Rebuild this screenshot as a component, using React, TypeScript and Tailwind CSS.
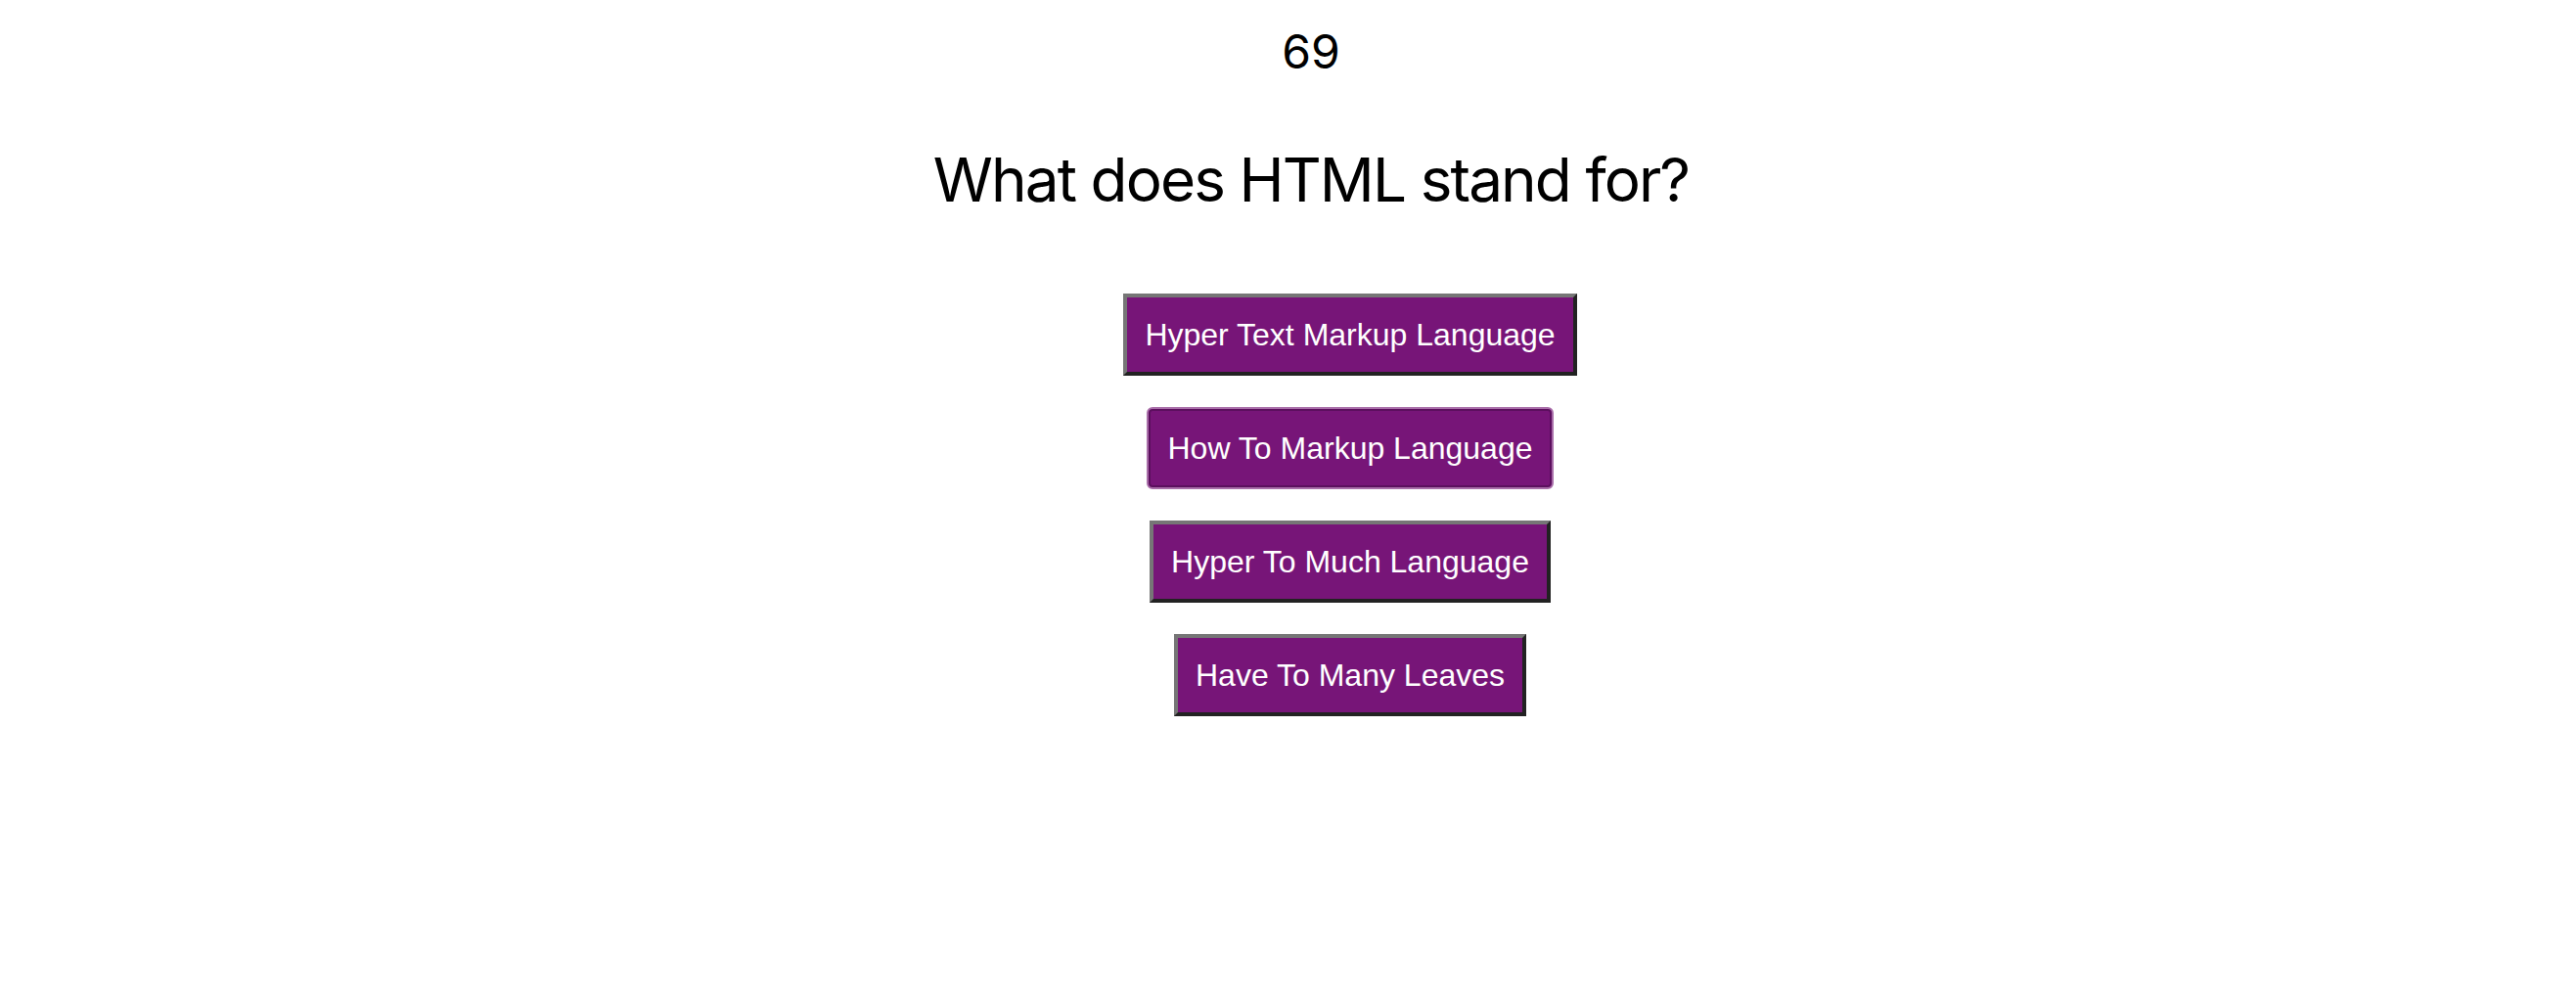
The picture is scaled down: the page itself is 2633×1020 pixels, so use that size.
import React from 'react';

const answers = [
  { label: 'Hyper Text Markup Language', style: 'outset' },
  { label: 'How To Markup Language', style: 'rounded' },
  { label: 'Hyper To Much Language', style: 'outset' },
  { label: 'Have To Many Leaves', style: 'outset' },
];

function AnswerButton({ label, variant }: { label: string; variant: string }) {
  const base =
    "bg-[#771578] text-white text-[32px] leading-[38px] font-['Liberation_Sans',Arial,sans-serif] whitespace-nowrap";
  if (variant === 'rounded') {
    return (
      <button
        className={`${base} py-[21px] px-[20px] rounded-[6px] border-2 border-[#a96ea9] shadow-[inset_0_0_0_2px_#5c0f5e]`}
      >
        {label}
      </button>
    );
  }
  return (
    <button
      className={`${base} py-[19px] px-[18px] border-4 border-t-[#767676] border-l-[#767676] border-b-[#222222] border-r-[#222222]`}
    >
      {label}
    </button>
  );
}

export default function App() {
  return (
    <div className="min-h-screen w-full bg-white pl-[47px] pt-[24px] text-black font-['Inter',sans-serif]">
      <div className="flex flex-col items-center">
        <div className="text-[48px] leading-[58px]">69</div>
        <h1 className="mt-[64px] text-[62px] leading-[75px] font-normal tracking-[-1.9px]">What does HTML stand for?</h1>
        <div className="mt-[79px] flex flex-col items-center gap-[32px] pl-[80px]">
          {answers.map((a) => (
            <AnswerButton key={a.label} label={a.label} variant={a.style} />
          ))}
        </div>
      </div>
    </div>
  );
}
